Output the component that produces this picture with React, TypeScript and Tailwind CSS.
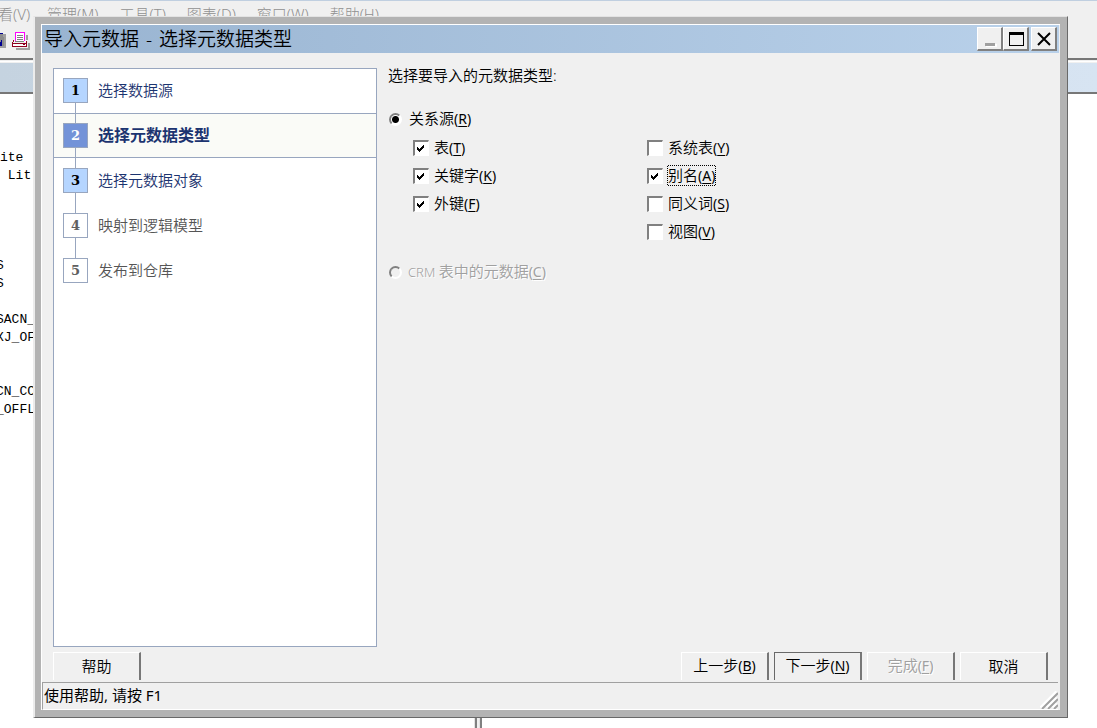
import React, { useState } from 'react';
import { clsx } from 'clsx';

interface Step {
  title: string;
  state: 'ready' | 'active' | 'pending';
}

interface Option {
  id: string;
  label: string;
  hotkey: string;
}

const menus = ['看(V)', '管理(M)', '工具(T)', '图表(D)', '窗口(W)', '帮助(H)'];

// The pane starts half a character to the left of the window edge
const treeLines = [
  'ite', ' Lit', '', '', '', '', 'S', 'S', '', 'SACN_', 'XJ_OF', '', '', 'CN_CC', '_OFFL',
];

const steps: Step[] = [
  { title: '选择数据源', state: 'ready' },
  { title: '选择元数据类型', state: 'active' },
  { title: '选择元数据对象', state: 'ready' },
  { title: '映射到逻辑模型', state: 'pending' },
  { title: '发布到仓库', state: 'pending' },
];

const leftOptions: Option[] = [
  { id: 'table', label: '表', hotkey: 'T' },
  { id: 'key', label: '关键字', hotkey: 'K' },
  { id: 'foreign', label: '外键', hotkey: 'F' },
];

const rightOptions: Option[] = [
  { id: 'system', label: '系统表', hotkey: 'Y' },
  { id: 'alias', label: '别名', hotkey: 'A' },
  { id: 'synonym', label: '同义词', hotkey: 'S' },
  { id: 'view', label: '视图', hotkey: 'V' },
];

function Hotkey({ char }: { char: string }) {
  return (
    <span className="text-[14px] font-normal">
      (<span className="underline underline-offset-2">{char}</span>)
    </span>
  );
}

function Background() {
  return (
    <div className="flex h-full flex-col">
      {/* Menu and toolbar */}
      <div className="h-[58px] border-t border-[#c0cfe0] bg-[#f0f0f0]">
        <nav className="-ml-0.5 flex h-[26px] items-center gap-[21px] font-light whitespace-nowrap text-[#909090]">
          {menus.map((menu, i) => (
            <button key={menu} className={clsx('font-light', i === 0 && '-mr-1')}>{menu}</button>
          ))}
        </nav>
        <div className="flex h-7 items-center gap-1">
          <svg width="7" height="18" viewBox="0 0 7 18" shapeRendering="crispEdges">
            <path d="M2 2h4v14H0v-2h2z" fill="#a0a0a0" />
            <path d="M0 1h3v4h1v9H0z" fill="#8c8c8c" />
            <path d="M0 1h3v1H0zM1 8h1v4H0v-2h1zM0 12h2v2H0z" fill="#000090" />
          </svg>
          <svg width="20" height="20" viewBox="0 0 20 20" shapeRendering="crispEdges">
            <path d="M15 4h2v8h2v7H5v-2h12V9h-2z" fill="#a0a0a0" />
            <path d="M4 1h10v10H4z" fill="#fff" />
            <path d="M4 1h10v10h-1V2H5v8H4z" fill="#f0f" />
            <path d="M6 4h6v1H6zM6 6h6v1H6zM6 8h6v1H6z" fill="#808080" />
            <path d="M2 10h13v1H2zM1 12h15v3H1z" fill="#fff" />
            <path d="M2 9h1v2H2zM1 11h1v1H1zM1 12h15v1H1zM1 15h15v1H1zM1 12h1v4H1zM15 10h1v6h-1zM12 13h2v1h-2z" fill="#900020" />
            <path d="M4 10h9v1H4z" fill="#808080" />
          </svg>
        </div>
      </div>
      <div className="h-1 border-t-2 border-b border-t-[#777777] border-b-white bg-[#f0f0f0]" />
      <div className="h-8 border-t border-b-2 border-t-[#f0f0f0] border-b-[#777777] bg-linear-to-r from-[#c5d3e0] to-[#d7e4f2]" />

      {/* Model tree and splitter */}
      <div className="flex min-h-0 flex-1 bg-white">
        <pre className="-ml-1 w-[479px] overflow-hidden border-r border-[#e3e3e3] pt-[55px] font-['Liberation_Mono',monospace] text-[13px] leading-[18px] text-black">
          {treeLines.map((line, i) => (
            <div key={i} className={clsx('h-[18px]', i < 2 && 'pl-1')}>{line}</div>
          ))}
        </pre>
        <div className="w-[5px] border-r border-l-2 border-r-[#e3e3e3] border-l-[#808080] bg-[#f0f0f0]" />
        <div className="flex-1 border-l-2 border-[#808080]" />
      </div>
    </div>
  );
}

function CaptionButton({ label, children }: { label: string; children: React.ReactNode }) {
  return (
    <button
      aria-label={label}
      className="flex h-6 w-[26px] items-center justify-center border-t border-r-2 border-b-2 border-l border-t-white border-r-[#808080] border-b-[#808080] border-l-white bg-[#f0f0f0]"
    >
      {children}
    </button>
  );
}

function TitleBar() {
  return (
    <header className="mr-px flex h-7 items-center bg-linear-to-r from-[#99b4d1] to-[#b9d1ea] pr-0.5 pl-0.5">
      <h1 className="flex-1 text-[19px] leading-7 font-[350] text-black">
        导入元数据<span className="mx-0.5"> - </span>选择元数据类型
      </h1>
      <CaptionButton label="最小化">
        <svg width="16" height="16" shapeRendering="crispEdges">
          <path d="M4 13h11v3H4z" fill="#fff" />
          <path d="M3 12h10v3H3z" fill="#a0a0a0" />
        </svg>
      </CaptionButton>
      <CaptionButton label="最大化">
        <svg width="16" height="16" shapeRendering="crispEdges">
          <path d="M1 1h15v14H1zM2 4v10h13V4z" fill="#000" fillRule="evenodd" />
        </svg>
      </CaptionButton>
      <div className="ml-0.5 flex">
        <CaptionButton label="关闭">
          <svg width="16" height="16">
            <path d="M2 2l12 12M14 2L2 14" stroke="#000" strokeWidth="2" />
          </svg>
        </CaptionButton>
      </div>
    </header>
  );
}

function StepList() {
  return (
    <aside className="w-[324px] shrink-0 border border-[#98a6bf] bg-white">
      <ol className="-mt-px">
        {steps.map((step, i) => (
          <li
            key={step.title}
            className={clsx(
              'flex h-[45px] gap-2.5 pl-[9px]',
              step.state === 'active' && 'border-y border-[#98a6bf] bg-[#fafbf7] text-base font-bold text-[#1c3470]',
              step.state === 'ready' && 'font-[350] text-[#1c3470]',
              step.state === 'pending' && 'font-[350] text-[#555555]'
            )}
          >
            <div className="flex flex-col items-center">
              <div className={clsx('w-px flex-1', i > 0 && 'bg-[#98a6bf]')} />
              <div
                className={clsx(
                  "flex size-[25px] items-center justify-center border border-[#98a6bf] font-['DejaVu_Serif',serif] text-[13px] font-bold",
                  step.state === 'active' && 'bg-[#7393d8] text-white',
                  step.state === 'ready' && 'bg-[#b5d5ff] text-black',
                  step.state === 'pending' && 'bg-white text-[#606060]'
                )}
              >
                {i + 1}
              </div>
              <div className={clsx('w-px flex-1', i < steps.length - 1 && 'bg-[#98a6bf]')} />
            </div>
            <span className="self-center pb-0.5">{step.title}</span>
          </li>
        ))}
      </ol>
    </aside>
  );
}

interface CheckProps {
  option: Option;
  checked: boolean;
  focused?: boolean;
  onToggle: (id: string) => void;
}

function Check({ option, checked, focused, onToggle }: CheckProps) {
  return (
    <label className="flex h-7 items-center gap-1">
      <span className="relative size-4">
        <input
          type="checkbox"
          checked={checked}
          onChange={() => onToggle(option.id)}
          className="block size-4 appearance-none border-t-2 border-r border-b border-l-2 border-t-[#808080] border-r-white border-b-white border-l-[#808080] bg-white"
        />
        {checked && (
          <svg className="pointer-events-none absolute inset-0" width="16" height="16" shapeRendering="crispEdges">
            <path d="M4 7h1v1h1v1h1v-1h1v-1h1v-1h1v-1h1v3h-1v1h-1v1h-1v1h-1v1h-1v-1h-1v-1h-1z" fill="#000" />
          </svg>
        )}
      </span>
      <span
        className={clsx(
          'mb-0.5 p-px',
          focused && 'bg-[repeating-conic-gradient(#000_0_25%,#f0f0f0_0_50%)] bg-size-[2px_2px]'
        )}
      >
        <span className="block bg-[#f0f0f0] leading-[18px]">
          {option.label}
          <Hotkey char={option.hotkey} />
        </span>
      </span>
    </label>
  );
}

const radioClass =
  'size-[13px] appearance-none rounded-full border-2 border-t-[#808080] border-r-white border-b-white border-l-[#808080]';

function WizardButton({ children, disabled, primary }: { children: React.ReactNode; disabled?: boolean; primary?: boolean }) {
  return (
    <button
      disabled={disabled}
      className={clsx(
        'h-7 w-[88px] border-t border-r-2 border-l border-r-[#777777] pb-0.5 font-[350]',
        primary ? 'border-t-[#696969] border-l-[#696969]' : 'border-t-white border-l-white',
        disabled ? 'text-[#a0a0a0] text-shadow-[1px_1px_0_#fff]' : 'text-black'
      )}
    >
      {children}
    </button>
  );
}

export default function App() {
  const [source, setSource] = useState('relational');
  const [selected, setSelected] = useState<string[]>(['table', 'key', 'foreign', 'alias']);

  const toggle = (id: string) => {
    setSelected(selected.includes(id) ? selected.filter((s) => s !== id) : [...selected, id]);
  };

  return (
    <div className="relative h-screen overflow-hidden bg-white font-['Noto_Sans','Noto_Sans_CJK_SC',sans-serif] text-[15px] leading-5 text-black">
      <Background />

      {/* Wizard dialog */}
      <div className="absolute top-4 right-[29px] bottom-[10px] left-[33px] flex flex-col border-t border-r border-b border-l-2 border-t-[#e3e3e3] border-r-[#696969] border-b-[#696969] border-l-[#ececec] bg-[#b3b3b3] pt-[7px] pr-[7px] pb-[7px] pl-1.5">
        <div className="flex min-h-0 flex-1 flex-col border-t border-l border-white bg-[#f0f0f0]">
          <TitleBar />

          <div className="flex min-h-0 flex-1 gap-[11px] px-[11px] pt-[15px]">
            <StepList />
            <main className="flex-1 font-[350]">
              <p className="leading-[14px]">选择要导入的元数据类型:</p>
              <label className="mt-[26px] flex h-[22px] items-center gap-[7px] pl-px">
                <input
                  type="radio"
                  name="source"
                  checked={source === 'relational'}
                  onChange={() => setSource('relational')}
                  className={clsx(radioClass, 'bg-white checked:bg-[radial-gradient(#000_3px,#fff_4px)]')}
                />
                <span className="mb-0.5">关系源<Hotkey char="R" /></span>
              </label>
              <div className="mt-1 flex pl-[25px]">
                <div className="w-[234px]">
                  {leftOptions.map((option) => (
                    <Check key={option.id} option={option} checked={selected.includes(option.id)} onToggle={toggle} />
                  ))}
                </div>
                <div>
                  {rightOptions.map((option) => (
                    <Check
                      key={option.id}
                      option={option}
                      checked={selected.includes(option.id)}
                      focused={option.id === 'alias'}
                      onToggle={toggle}
                    />
                  ))}
                </div>
              </div>
              <label className="mt-3 flex h-7 items-center gap-1.5 pl-px text-[#a0a0a0] text-shadow-[1px_1px_0_#fff]">
                <input type="radio" name="source" disabled className={radioClass} />
                <span className="mb-0.5"><span className="text-[13px]">CRM </span>表中的元数据<Hotkey char="C" /></span>
              </label>
            </main>
          </div>

          <div className="flex gap-[5px] pt-[5px] pr-3 pb-0.5 pl-[11px]">
            <WizardButton>帮助</WizardButton>
            <div className="flex-1" />
            <WizardButton>上一步<Hotkey char="B" /></WizardButton>
            <WizardButton primary>下一步<Hotkey char="N" /></WizardButton>
            <WizardButton disabled>完成<Hotkey char="F" /></WizardButton>
            <WizardButton>取消</WizardButton>
          </div>

          <footer className="mr-0.5 flex h-7 items-center justify-between border-t border-b border-l border-t-[#a0a0a0] border-b-white border-l-[#a0a0a0] pl-px">
            <span className="mb-0.5">使用帮助, 请按 F1</span>
            <svg className="self-end" width="18" height="18" viewBox="0 0 18 18">
              <path d="M1 17L17 1M7 17L17 7M13 17l4-4" stroke="#fff" strokeWidth="4" />
              <path d="M2 18L18 2M8 18L18 8M14 18l4-4" stroke="#a0a0a0" strokeWidth="2" />
            </svg>
          </footer>
        </div>
      </div>
    </div>
  );
}
